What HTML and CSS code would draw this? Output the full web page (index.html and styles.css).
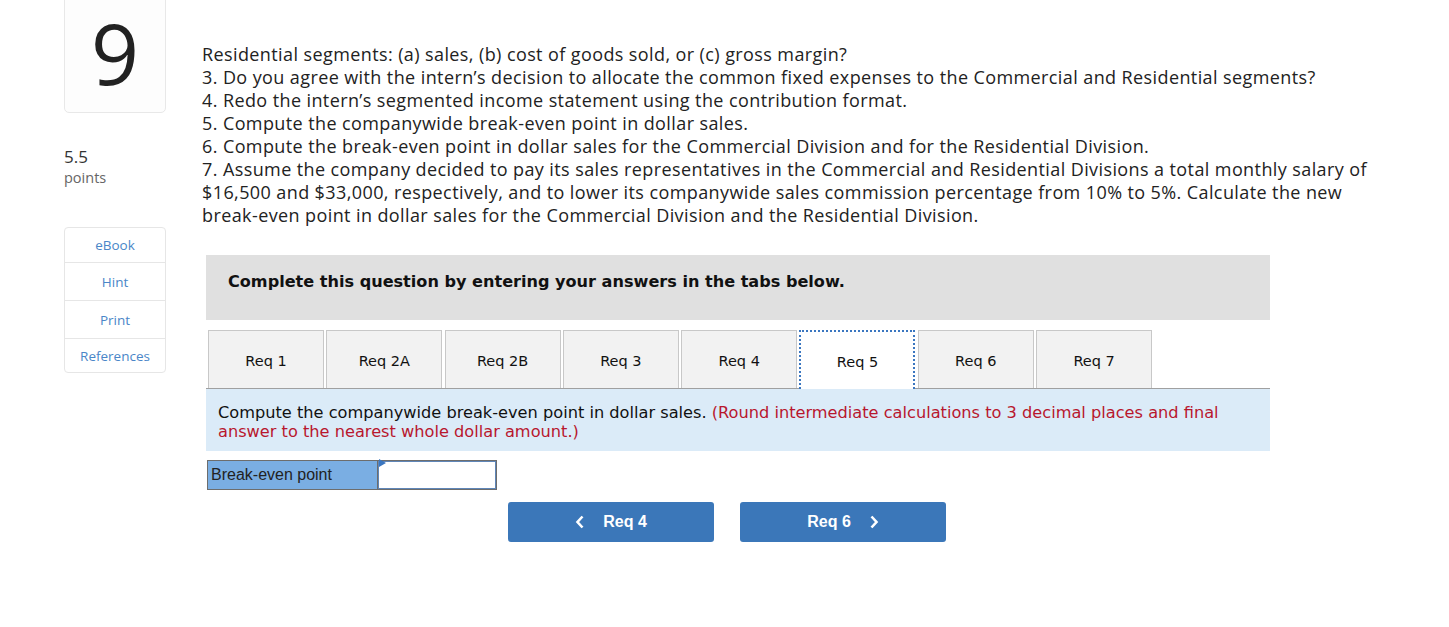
FILE: index.html
```html
<!DOCTYPE html>
<html>
<head>
<meta charset="utf-8">
<link rel="stylesheet" href="styles.css">
</head>
<body>
<div class="page">
  <aside class="side">
    <div class="qnum"><span>9</span></div>
    <div class="score">5.5</div>
    <div class="pts">points</div>
    <div class="links">
      <div class="link">eBook</div>
      <div class="link">Hint</div>
      <div class="link">Print</div>
      <div class="link">References</div>
    </div>
  </aside>
  <main class="main">
    <p class="prompt">Residential segments: (a) sales, (b) cost of goods sold, or (c) gross margin?<br>3. Do you agree with the intern’s decision to allocate the common fixed expenses to the Commercial and Residential segments?<br>4. Redo the intern’s segmented income statement using the contribution format.<br>5. Compute the companywide break-even point in dollar sales.<br>6. Compute the break-even point in dollar sales for the Commercial Division and for the Residential Division.<br>7. Assume the company decided to pay its sales representatives in the Commercial and Residential Divisions a total monthly salary of<br>$16,500 and $33,000, respectively, and to lower its companywide sales commission percentage from 10% to 5%. Calculate the new<br>break-even point in dollar sales for the Commercial Division and the Residential Division.</p>
    <div class="work">
      <div class="instr">Complete this question by entering your answers in the tabs below.</div>
      <div class="tabs">
        <div class="tab">Req 1</div>
        <div class="tab">Req 2A</div>
        <div class="tab">Req 2B</div>
        <div class="tab">Req 3</div>
        <div class="tab">Req 4</div>
        <div class="tab active">Req 5</div>
        <div class="tab">Req 6</div>
        <div class="tab">Req 7</div>
      </div>
      <div class="info">Compute the companywide break-even point in dollar sales. <span class="red">(Round intermediate calculations to 3 decimal places and final answer to the nearest whole dollar amount.)</span></div>
      <div class="answer">
        <div class="label">Break-even point</div>
        <div class="input"><span class="flag"></span></div>
      </div>
      <div class="navs">
        <div class="btn"><svg class="chev" width="10" height="14" viewBox="0 0 10 14"><polyline points="7.5,1.5 2.5,7 7.5,12.5" fill="none" stroke="#fff" stroke-width="2.6"/></svg><span>Req 4</span></div>
        <div class="btn"><span>Req 6</span><svg class="chev" width="10" height="14" viewBox="0 0 10 14"><polyline points="2.5,1.5 7.5,7 2.5,12.5" fill="none" stroke="#fff" stroke-width="2.6"/></svg></div>
      </div>
    </div>
  </main>
</div>
</body>
</html>
```
FILE: styles.css
```css
html, body {
  margin: 0;
  padding: 0;
  background: #fff;
}
.page {
  display: flex;
  align-items: flex-start;
  font-family: "Open Sans", Lato, sans-serif;
  color: #222;
}
.side {
  width: 102px;
  margin-left: 64px;
  display: flex;
  flex-direction: column;
}
.qnum {
  margin-top: -14px;
  height: 127px;
  box-sizing: border-box;
  border: 1px solid #e8e8e8;
  border-radius: 5px;
  background: #fdfdfd;
  display: flex;
  align-items: center;
  justify-content: center;
  font-family: "Open Sans", sans-serif;
  font-weight: 400;
  font-size: 84px;
  line-height: 0.8;
  color: #222;
  padding-top: 6px;
}
.score {
  margin-top: 34px;
  font-size: 17px;
  line-height: 20px;
  color: #333;
}
.pts {
  font-size: 14.5px;
  line-height: 22px;
  color: #666;
}
.links {
  margin-top: 38px;
  border: 1px solid #e6e6e6;
  border-radius: 4px;
}
.link {
  height: 37px;
  display: flex;
  align-items: center;
  justify-content: center;
  font-size: 13.5px;
  color: #4a86c8;
  border-top: 1px solid #e6e6e6;
}
.link:first-child {
  border-top: none;
  height: 34px;
}
.link:last-child {
  height: 33px;
}
.main {
  margin-left: 36px;
  display: flex;
  flex-direction: column;
}
.prompt {
  margin: 43px 0 0 0;
  font-size: 18px;
  line-height: 23px;
  letter-spacing: 0.4px;
  white-space: nowrap;
  color: #222;
}
.work {
  margin-left: 4px;
  width: 1064px;
  display: flex;
  flex-direction: column;
  font-family: Verdana, "DejaVu Sans", sans-serif;
}
.instr {
  margin-top: 28px;
  height: 65px;
  box-sizing: border-box;
  background: #e0e0e0;
  padding: 17px 22px 0;
  font-weight: bold;
  font-size: 16.1px;
  line-height: 20px;
  color: #111;
}
.tabs {
  margin-top: 10px;
  display: flex;
  gap: 2.3px;
  padding-left: 2px;
  border-bottom: 1px solid #a0a0a0;
}
.tab {
  width: 116px;
  height: 58px;
  box-sizing: border-box;
  border: 1px solid #c8c8c8;
  border-bottom: none;
  background: #f2f2f2;
  display: flex;
  align-items: center;
  justify-content: center;
  font-size: 14.5px;
  color: #111;
  padding-top: 2px;
}
.tab.active {
  background: #fff;
  border: 2px dotted #3a76c0;
  border-bottom: none;
  margin-bottom: -1px;
  height: 59px;
}
.info {
  height: 62px;
  box-sizing: border-box;
  background: #dbebf8;
  padding: 14px 12px 0;
  font-size: 16.2px;
  line-height: 19px;
  color: #111;
}
.red {
  color: #b8172e;
}
.answer {
  margin-top: 9px;
  margin-left: 1px;
  display: flex;
  height: 30px;
}
.label {
  width: 170px;
  box-sizing: border-box;
  background: #7aaee3;
  border: 1px solid #6d6d6d;
  border-right: none;
  font-family: "Liberation Sans", Arial, sans-serif;
  font-size: 16px;
  line-height: 28px;
  padding-left: 3px;
  color: #222;
}
.input {
  position: relative;
  width: 120px;
  box-sizing: border-box;
  background: #fff;
  border: 1px solid #6d6d6d;
  box-shadow: inset 0 0 0 1px #5f86b8;
}
.flag {
  position: absolute;
  left: 1px;
  top: 1px;
  width: 0;
  height: 0;
  border-left: 7px solid #3a76c0;
  border-top: 4px solid transparent;
  border-bottom: 4px solid transparent;
  margin-top: -3px;
}
.navs {
  margin-top: 12px;
  margin-left: 302px;
  display: flex;
  gap: 26px;
}
.btn {
  width: 206px;
  height: 40px;
  border-radius: 3px;
  background: #3b77b9;
  color: #fff;
  display: flex;
  align-items: center;
  justify-content: center;
  gap: 18px;
  font-family: "Liberation Sans", Arial, sans-serif;
  font-weight: bold;
  font-size: 16px;
}
.chev {
  display: block;
}
```
